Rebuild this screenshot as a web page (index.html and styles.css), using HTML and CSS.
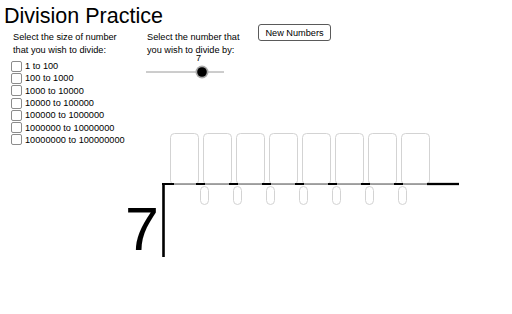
FILE: index.html
```html
<!DOCTYPE html>
<html>
<head>
<meta charset="utf-8">
<link rel="stylesheet" href="styles.css">
</head>
<body>
<h1 class="title">Division Practice</h1>
<div class="main">
  <div class="left">
    <p class="hint">Select the size of number<br>that you wish to divide:</p>
    <ul class="sizes">
      <li><span class="box"></span>1 to 100</li>
      <li><span class="box"></span>100 to 1000</li>
      <li><span class="box"></span>1000 to 10000</li>
      <li><span class="box"></span>10000 to 100000</li>
      <li><span class="box"></span>100000 to 1000000</li>
      <li><span class="box"></span>1000000 to 10000000</li>
      <li><span class="box"></span>10000000 to 100000000</li>
    </ul>
  </div>
  <div class="right">
    <div class="controls">
      <div class="divisor">
        <p class="hint">Select the number that<br>you wish to divide by:</p>
        <div class="slider">
          <span class="slider-value">7</span>
          <svg width="80" height="16" viewBox="0 0 80 16">
            <line x1="0" y1="8" x2="78" y2="8" stroke="#9a9a9a" stroke-width="1"/>
            <circle cx="56" cy="8" r="6.5" fill="#aaaaaa"/>
            <circle cx="56" cy="8" r="4.8" fill="#000"/>
          </svg>
        </div>
      </div>
      <button class="btn">New Numbers</button>
    </div>
    <div class="division">
      <svg width="350" height="136" viewBox="117 127 350 136">
        <g fill="none" stroke="#d3d3d3" stroke-width="1">
          <rect x="171.5" y="133.5" width="28" height="51" rx="4"/>
          <rect x="204.5" y="133.5" width="28" height="51" rx="4"/>
          <rect x="237.5" y="133.5" width="28" height="51" rx="4"/>
          <rect x="270.5" y="133.5" width="28" height="51" rx="4"/>
          <rect x="303.5" y="133.5" width="28" height="51" rx="4"/>
          <rect x="336.5" y="133.5" width="28" height="51" rx="4"/>
          <rect x="369.5" y="133.5" width="28" height="51" rx="4"/>
          <rect x="402.5" y="133.5" width="28" height="51" rx="4"/>
          <rect x="201.5" y="186.5" width="8" height="18" rx="4"/>
          <rect x="234.5" y="186.5" width="8" height="18" rx="4"/>
          <rect x="267.5" y="186.5" width="8" height="18" rx="4"/>
          <rect x="300.5" y="186.5" width="8" height="18" rx="4"/>
          <rect x="333.5" y="186.5" width="8" height="18" rx="4"/>
          <rect x="366.5" y="186.5" width="8" height="18" rx="4"/>
          <rect x="399.5" y="186.5" width="8" height="18" rx="4"/>
        </g>
        <line x1="165" y1="184" x2="430" y2="184" stroke="#8a8a8a" stroke-width="1.3"/>
        <g stroke="#000" stroke-width="2">
          <line x1="163" y1="184" x2="175" y2="184"/>
          <line x1="197" y1="184" x2="206" y2="184"/>
          <line x1="230" y1="184" x2="239" y2="184"/>
          <line x1="263" y1="184" x2="272" y2="184"/>
          <line x1="296" y1="184" x2="305" y2="184"/>
          <line x1="329" y1="184" x2="338" y2="184"/>
          <line x1="362" y1="184" x2="371" y2="184"/>
          <line x1="395" y1="184" x2="404" y2="184"/>
          <line x1="428" y1="184" x2="460" y2="184" stroke-width="2.3"/>
        </g>
        <line x1="164.5" y1="183" x2="164.5" y2="257" stroke="#000" stroke-width="2.6"/>
        <text x="126" y="250" class="divisor-num">7</text>
      </svg>
    </div>
  </div>
</div>
</body>
</html>
```
FILE: styles.css
```css
html, body {
  margin: 0;
  padding: 0;
  background: #fff;
}
body {
  width: 512px;
  height: 314px;
  overflow: hidden;
  font-family: "Liberation Sans", Arial, sans-serif;
  color: #000;
}
.title {
  margin: 0;
  padding: 5px 0 0 4px;
  font-size: 21.5px;
  font-weight: normal;
  line-height: 22px;
  height: 27px;
  box-sizing: border-box;
}
.main {
  display: flex;
}
.left {
  width: 146px;
  padding-left: 11px;
  box-sizing: border-box;
}
.hint {
  margin: 0;
  padding-left: 2px;
  font-size: 9.2px;
  line-height: 13px;
  padding-top: 4px;
}
.right .hint {
  padding-left: 1px;
}
.sizes {
  list-style: none;
  margin: 3px 0 0 0;
  padding: 0;
}
.sizes li {
  display: flex;
  align-items: center;
  height: 12.3px;
  font-size: 9.2px;
  white-space: nowrap;
}
.box {
  width: 9px;
  height: 9px;
  border: 1px solid #8c8c8c;
  border-radius: 2px;
  margin-right: 3px;
  flex: none;
}
.right {
  display: flex;
  flex-direction: column;
}
.controls {
  display: flex;
  align-items: flex-start;
}
.divisor {
  width: 112px;
}
.slider {
  position: relative;
  padding-top: 7px;
  height: 20px;
}
.slider svg {
  display: block;
}
.slider-value {
  position: absolute;
  left: 50px;
  top: -3px;
  font-size: 9.2px;
  line-height: 9px;
}
.btn {
  margin-top: -3px;
  width: 73px;
  height: 17px;
  padding: 0;
  font-family: "Liberation Sans", Arial, sans-serif;
  font-size: 9.2px;
  background: #fff;
  border: 1px solid #5a5a5a;
  border-radius: 3px;
  color: #000;
}
.division {
  margin-left: -30px;
  margin-top: 43px;
}
.division svg {
  display: block;
}
.divisor-num {
  font-family: "Liberation Sans", Arial, sans-serif;
  font-size: 61px;
  fill: #000;
}
```
